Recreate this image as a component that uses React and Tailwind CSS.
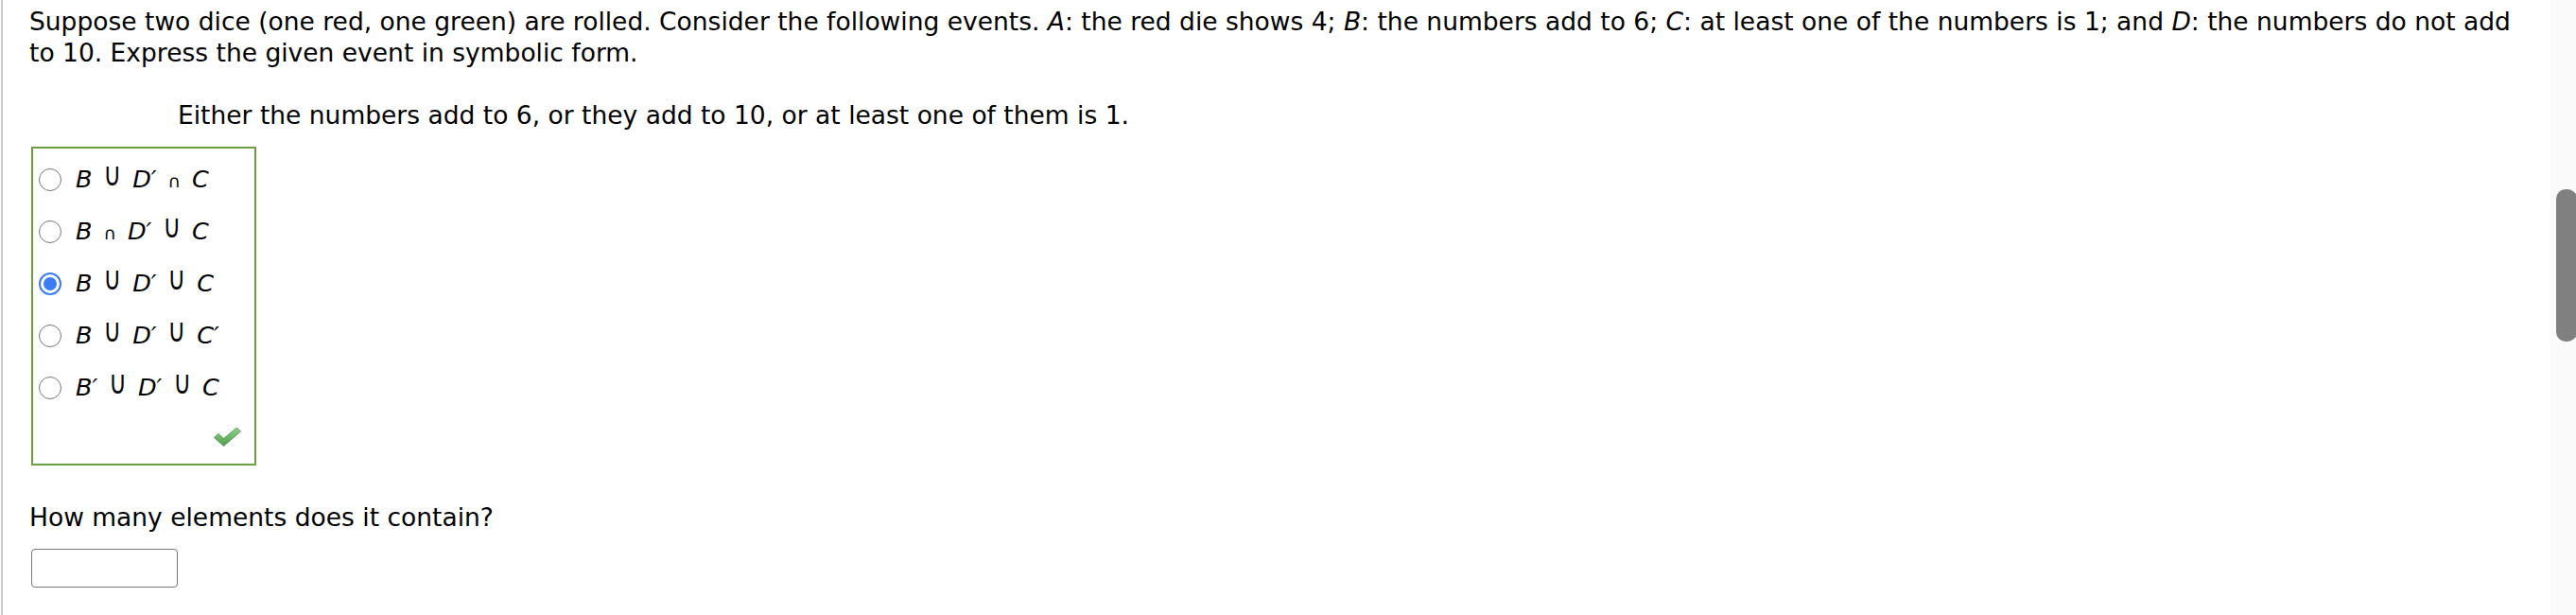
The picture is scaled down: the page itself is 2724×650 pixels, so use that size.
import React from "react";

const options = [
  { id: 1, parts: ["B", "cup", "D'", "cap", "C"] },
  { id: 2, parts: ["B", "cap", "D'", "cup", "C"] },
  { id: 3, parts: ["B", "cup", "D'", "cup", "C"] },
  { id: 4, parts: ["B", "cup", "D'", "cup", "C'"] },
  { id: 5, parts: ["B'", "cup", "D'", "cup", "C"] },
];

const MathPart = ({ p }) => {
  if (p === "cup") return <span className="inline-block origin-bottom scale-y-[1.35] not-italic">∪</span>;
  if (p === "cap") return <span className="not-italic text-[0.72em]">∩</span>;
  return <i>{p.replace("'", "′")}</i>;
};

const Radio = ({ checked }) => {
  if (checked) {
    return (
      <span className="flex h-[24px] w-[24px] shrink-0 items-center justify-center rounded-full border-[2px] border-[#3b7cf2] bg-white">
        <span className="h-[14px] w-[14px] rounded-full bg-[#3b7cf2]"></span>
      </span>
    );
  }
  return <span className="h-[24px] w-[24px] shrink-0 rounded-full border-[1.5px] border-[#767676] bg-white"></span>;
};

const CheckMark = () => (
  <svg width="31" height="22" viewBox="0 0 31 22">
    <defs>
      <linearGradient id="ck" x1="0" y1="0" x2="0" y2="1">
        <stop offset="0" stopColor="#8fd18f" />
        <stop offset="1" stopColor="#4e9e4e" />
      </linearGradient>
    </defs>
    <path
      d="M1.5 11.5 L6 7.5 L11.5 12.5 L25.5 1 L29.5 5 L11.5 20.5 Z"
      fill="url(#ck)"
      stroke="#5aa05a"
      strokeWidth="1"
      strokeLinejoin="round"
    />
  </svg>
);

export default function App() {
  const selected = 3;
  return (
    <div className="flex h-[650px] w-full overflow-hidden bg-white text-black [font-family:'DejaVu_Sans',Verdana,sans-serif]">
      <div className="ml-[1px] w-[2px] shrink-0 bg-[#cccccc]"></div>
      <div className="flex-1 pl-[28px] pr-[17px] pt-[6px] text-[26.5px] leading-[33px]">
        <p>
          Suppose two dice (one red, one green) are rolled. Consider the following events. <i>A</i>: the red die shows 4; <i>B</i>: the
          numbers add to 6; <i>C</i>: at least one of the numbers is 1; and <i>D</i>: the numbers do not add to 10. Express the given
          event in symbolic form.
        </p>
        <p className="mt-[33px] pl-[157px]">
          Either the numbers add to 6, or they add to 10, or at least one of them is 1.
        </p>
        <div className="mt-[17px] ml-[2px] flex h-[337px] w-[238px] flex-col border-2 border-[#6b9e3e] pt-[5px]">
          {options.map((o) => (
            <div key={o.id} className="flex h-[55px] items-center gap-[15px] pl-[6px]">
              <Radio checked={o.id === selected} />
              <span className="flex items-baseline gap-[12px] text-[25.5px] leading-none">
                {o.parts.map((p, i) => (
                  <MathPart key={i} p={p} />
                ))}
              </span>
            </div>
          ))}
          <div className="flex flex-1 items-end justify-end pr-[13px] pb-[17px]">
            <CheckMark />
          </div>
        </div>
        <p className="mt-[38px]">How many elements does it contain?</p>
        <div className="mt-[17px] ml-[2px]">
          <input type="text" className="h-[41px] w-[155px] rounded-[4px] border-[1.5px] border-[#767676] bg-white px-2 outline-none" />
        </div>
      </div>
      <div className="flex w-[27px] shrink-0 overflow-hidden">
        <div className="w-[2px] bg-[#dcdcdc]"></div>
        <div className="flex-1 bg-[#fafafa] pt-[200px] pl-[6px]">
          <div className="h-[161px] w-[22px] rounded-[10px] bg-[#808080]"></div>
        </div>
      </div>
    </div>
  );
}
